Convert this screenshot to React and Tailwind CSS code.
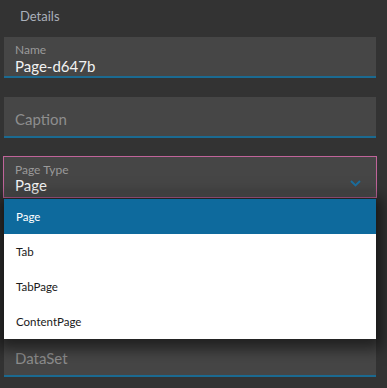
export default function App() {
  const font = { fontFamily: "Lato, 'Noto Sans', sans-serif" };
  const Field = ({ label, value, placeholder, className = "" }) => (
    <div className={`h-[41px] bg-[#464646] border-b-2 border-[#1b6a91] flex flex-col justify-center pt-[4px] px-[11px] ${className}`}>
      {label && <div className="text-[12px] leading-[14px] text-[#9a9a9a]">{label}</div>}
      {value && <div className="text-[15px] leading-[18px] text-[#f2f2f2]">{value}</div>}
      {placeholder && <div className="text-[15px] leading-[18px] text-[#8e8e8e]">{placeholder}</div>}
    </div>
  );
  return (
    <div className="w-[387px] h-[388px] bg-[#333333] relative overflow-hidden" style={font}>
      <div className="h-[37px] pl-[20px] pt-[7px] text-[13px] leading-[18px] text-[#aab0ba]">Details</div>
      <div className="pl-[4px] pr-[11px] flex flex-col gap-[19px]">
        <Field label="Name" value="Page-d647b" />
        <Field placeholder="Caption" />
        <div className="h-[42px] -mx-px -mt-px bg-[#464646] border border-[#c0649a] flex items-center justify-between pl-[11px] pr-[15px] shadow-[inset_0_-6px_6px_-4px_rgba(255,255,255,0.12)]">
          <div className="flex flex-col pt-[2px]">
            <div className="text-[12px] leading-[14px] text-[#9a9a9a]">Page Type</div>
            <div className="text-[15px] leading-[17px] text-[#f5f5f5]">Page</div>
          </div>
          <svg width="11" height="7" viewBox="0 0 11 7" className="mt-[12px]">
            <path d="M1 1 L5.5 5.5 L10 1" fill="none" stroke="#1b6fa0" strokeWidth="1.8" />
          </svg>
        </div>
        <Field className="-mt-[1px]" />
        <Field />
        <Field placeholder="DataSet" />
      </div>
      <div className="absolute left-[4px] top-[199px] w-[372px] bg-white shadow-[0_4px_14px_6px_rgba(0,0,0,0.55)] text-[11.5px] text-[#1a1a1a]">
        <div className="h-[35px] flex items-center pl-[12px] bg-[#0e6a9d] text-white">Page</div>
        <div className="h-[35px] flex items-center pl-[12px]">Tab</div>
        <div className="h-[35px] flex items-center pl-[12px]">TabPage</div>
        <div className="h-[35px] flex items-center pl-[12px]">ContentPage</div>
      </div>
    </div>
  );
}
